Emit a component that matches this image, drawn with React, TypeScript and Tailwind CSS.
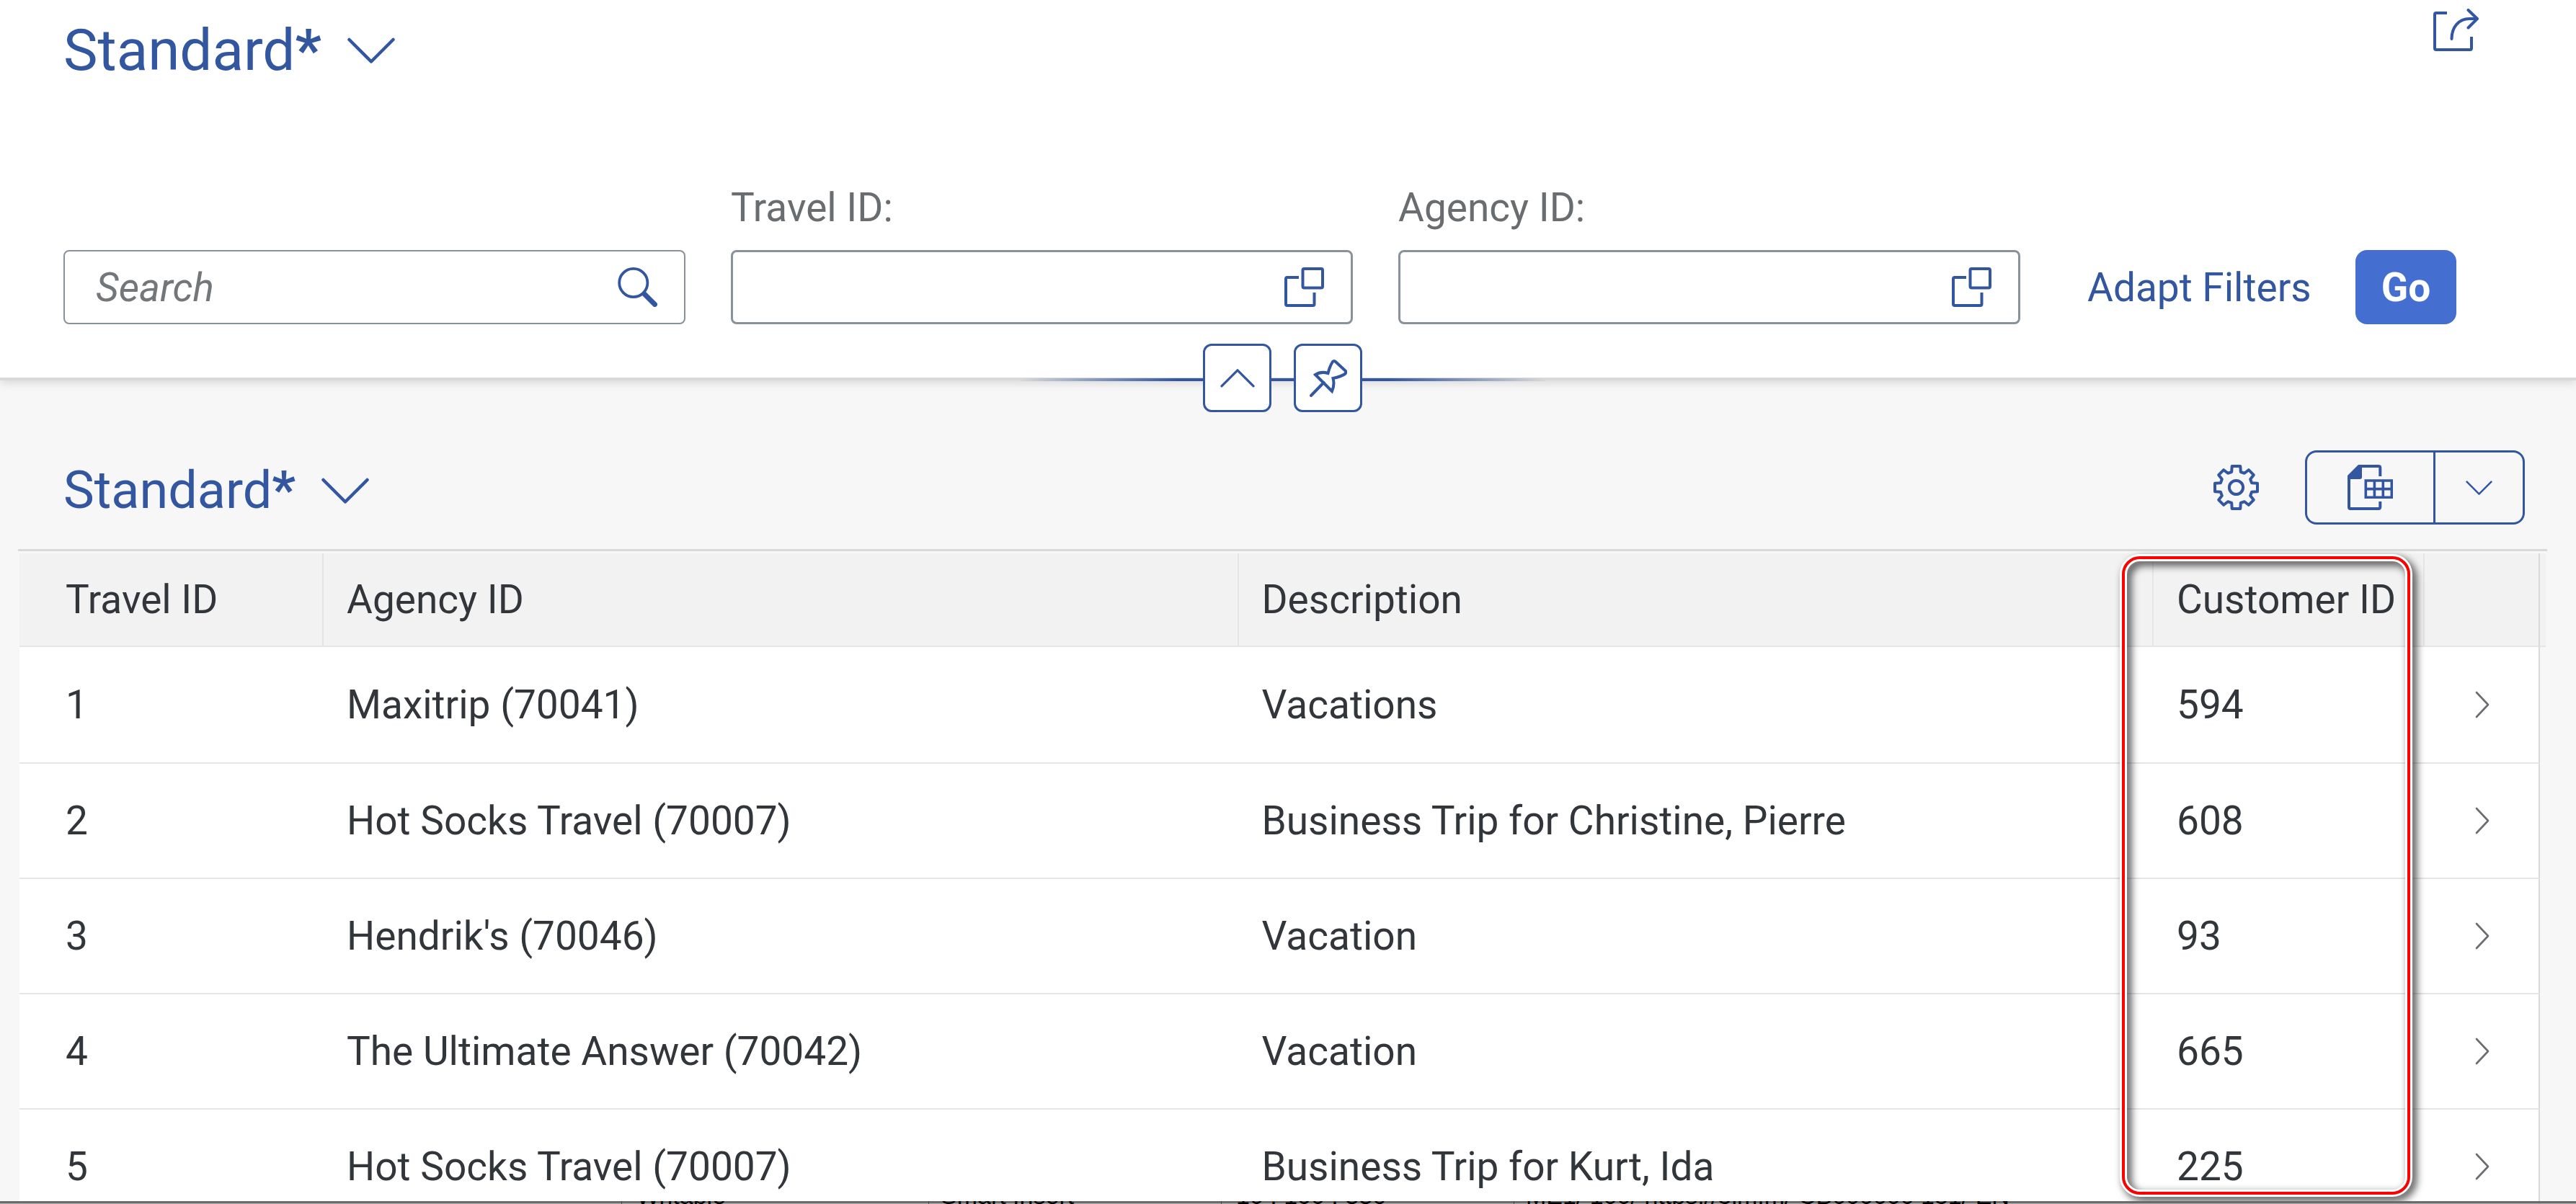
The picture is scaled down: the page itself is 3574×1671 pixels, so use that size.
import React from 'react';

interface Travel {
    id: number;
    agency: string;
    description: string;
    customer: number;
}

const travels: Travel[] = [
    { id: 1, agency: 'Maxitrip (70041)', description: 'Vacations', customer: 594 },
    { id: 2, agency: 'Hot Socks Travel (70007)', description: 'Business Trip for Christine, Pierre', customer: 608 },
    { id: 3, agency: "Hendrik's (70046)", description: 'Vacation', customer: 93 },
    { id: 4, agency: 'The Ultimate Answer (70042)', description: 'Vacation', customer: 665 },
    { id: 5, agency: 'Hot Socks Travel (70007)', description: 'Business Trip for Kurt, Ida', customer: 225 },
];

interface IconProps {
    className?: string;
}

const stroke = {
    fill: 'none',
    stroke: 'currentColor',
    strokeLinecap: 'round',
    strokeLinejoin: 'round',
} as const;

const ChevronIcon: React.FC<IconProps> = ({ className }) => (
    <svg viewBox="0 0 66 36" className={className} {...stroke} strokeWidth="4.5" aria-hidden="true">
        <path d="M2.5 3 33 33.5 63.5 3" />
    </svg>
);

const ShareIcon: React.FC<IconProps> = ({ className }) => (
    <svg viewBox="0 0 64 60" className={className} {...stroke} strokeWidth="4" aria-hidden="true">
        <path d="M19 6H4Q2 6 2 8V55Q2 57 4 57H51Q53 57 53 55V39" strokeLinecap="butt" />
        <path d="M25.5 42C25.5 25 36 14 50 14H60" />
        <path d="M48.5 2 61 14 48.5 26.5" />
    </svg>
);

const SearchIcon: React.FC<IconProps> = ({ className }) => (
    <svg viewBox="0 0 55 55" className={className} {...stroke} aria-hidden="true">
        <circle cx="21.8" cy="21.5" r="19.6" strokeWidth="3.8" />
        <path d="M37 37 51.5 51.5" strokeWidth="7" />
    </svg>
);

const ValueHelpIcon: React.FC<IconProps> = ({ className }) => (
    <svg viewBox="0 0 55 55" className={className} {...stroke} strokeWidth="4" strokeLinecap="butt" aria-hidden="true">
        <path d="M20 14H4Q2 14 2 16V51Q2 53 4 53H39.5Q41.5 53 41.5 51V35" />
        <rect x="25.5" y="2" width="27.5" height="26.5" rx="2" />
    </svg>
);

const PinIcon: React.FC<IconProps> = ({ className }) => (
    <svg viewBox="0 0 52 52" className={className} {...stroke} strokeWidth="4" aria-hidden="true">
        <path d="M2 50 19.5 32" />
        <path d="M8 21Q16 16 25.5 19Q28 9 32 3Q34 1 36 3L50 16Q51 18 49 20Q44 23.5 32.5 26Q35 35 31 44Z" strokeLinejoin="miter" />
    </svg>
);

const GearIcon: React.FC<IconProps> = ({ className }) => (
    <svg viewBox="-31.5 -31.5 63 63" className={className} {...stroke} strokeWidth="4" aria-hidden="true">
        <circle r="9.6" />
        <path d="M-5.8-29.5H5.8L6.3-21.5 11.5-19.7 17.3-24.3 24.3-17.3 19.7-11.5 21.5-6.3 29.5-5.8V5.8L21.5 6.3 19.7 11.5 24.3 17.3 17.3 24.3 11.5 19.7 6.3 21.5 5.8 29.5H-5.8L-6.3 21.5-11.5 19.7-17.3 24.3-24.3 17.3-19.7 11.5-21.5 6.3-29.5 5.8V-5.8L-21.5-6.3-19.7-11.5-24.3-17.3-17.3-24.3-11.5-19.7-6.3-21.5Z" />
    </svg>
);

const ExportIcon: React.FC<IconProps> = ({ className }) => (
    <svg viewBox="0 0 63 63" className={className} {...stroke} strokeLinecap="butt" strokeLinejoin="miter" aria-hidden="true">
        <path d="M16 2H43Q45.3 2 45.3 4V16M2 17V59Q2 61 4 61H43Q45.3 61 45.3 59V51" strokeWidth="4" />
        <path d="M15 0H20V17Q20 20 17 20H0V15Z" fill="currentColor" stroke="none" />
        <path d="M25.3 22H61.3V45.3H25.3ZM37.4 22V45.3M49.3 22V45.3M25.3 33.6H61.3" strokeWidth="3.6" />
    </svg>
);

interface FilterFieldProps {
    id: string;
    label: string;
}

const FilterField: React.FC<FilterFieldProps> = ({ id, label }) => (
    <div className="min-w-0">
        <label htmlFor={id} className="block mb-[27px] leading-[64px] text-[#6a6d70]">{label}</label>
        <div className="flex items-center h-[103px] border-3 border-[#89919a] rounded-lg bg-white pr-[37px]">
            <input id={id} type="text" className="flex-1 min-w-0 h-full px-10 outline-none" />
            <button type="button" aria-label={`Select ${label}`} className="text-[#3256a0]">
                <ValueHelpIcon className="w-[55px] h-[55px]" />
            </button>
        </div>
    </div>
);

const FilterHeader: React.FC = () => (
    <header className="relative z-10 shrink-0 bg-white border-b-4 border-[#d9d9d9] pt-3 pb-[74px] shadow-[0_4px_12px_rgba(0,0,0,0.12)]">
        <div className="flex items-start justify-between pl-[88px] pr-[134px] text-[#3256a0]">
            <button type="button" className="flex items-center gap-9 h-[116px] text-[80px] leading-none">
                <span>Standard<b>*</b></span>
                <ChevronIcon className="w-[66px] h-9" />
            </button>
            <button type="button" aria-label="Share">
                <ShareIcon className="w-16 h-[60px]" />
            </button>
        </div>
        <div className="grid grid-cols-[1fr_1fr_1fr_542px] items-end gap-x-[63px] mt-32 pl-[88px] pr-[166px]">
            <div className="flex min-w-0 items-center h-[103px] border-2 border-[#89919a] rounded-lg pr-[37px]">
                <input
                    type="search"
                    aria-label="Search"
                    placeholder="Search"
                    className="flex-1 min-w-0 h-full pl-[43px] outline-none placeholder:italic placeholder:text-[#74777a]"
                />
                <button type="button" aria-label="Start search" className="text-[#3256a0]">
                    <SearchIcon className="w-[55px] h-[55px]" />
                </button>
            </div>
            <FilterField id="travel-id" label="Travel ID:" />
            <FilterField id="agency-id" label="Agency ID:" />
            <div className="flex items-center justify-between pl-[30px]">
                <button type="button" className="text-[#3256a0]">Adapt Filters</button>
                <button type="button" className="w-[140px] h-[103px] rounded-2xl bg-[#446fd1] text-white font-bold">Go</button>
            </div>
        </div>
        {/* collapse / pin handles sit on the header's lower edge */}
        <div className="absolute inset-x-0 -bottom-12 flex justify-center gap-[31px] pr-[15px] text-[#3256a0]">
            <div className="absolute top-12 w-[730px] h-1 bg-linear-to-r from-[#d9d9d9] via-[#3256a0] via-30% to-[#3256a0] to-70%" />
            <div className="absolute top-12 w-[730px] h-1 bg-linear-to-l from-[#d9d9d9] to-transparent to-30%" />
            <button type="button" aria-label="Collapse header" className="relative flex items-center justify-center w-[95px] h-[95px] border-3 border-[#3256a0] rounded-xl bg-white">
                <ChevronIcon className="w-12 h-[26px] rotate-180" />
            </button>
            <button type="button" aria-label="Pin header" className="relative flex items-center justify-center w-[95px] h-[95px] border-3 border-[#3256a0] rounded-xl bg-white">
                <PinIcon className="w-[52px] h-[52px]" />
            </button>
        </div>
    </header>
);

const TableToolbar: React.FC = () => (
    <div className="flex shrink-0 items-center justify-between pt-[97px] pb-[34px] pl-[88px] pr-[71px] text-[#3256a0]">
        <button type="button" className="flex items-center gap-9 pt-2 text-7xl leading-none">
            <span>Standard<b>*</b></span>
            <ChevronIcon className="w-[66px] h-9" />
        </button>
        <div className="flex items-center gap-16">
            <button type="button" aria-label="Settings">
                <GearIcon className="w-[63px] h-[63px]" />
            </button>
            <div className="flex w-[305px] h-[103px] border-3 border-[#3256a0] rounded-2xl">
                <button type="button" aria-label="Export" className="flex items-center justify-center w-[178px] border-r-3 border-[#3256a0]">
                    <ExportIcon className="w-[63px] h-[63px]" />
                </button>
                <button type="button" aria-label="Export options" className="flex flex-1 items-center justify-center">
                    <ChevronIcon className="w-[37px] h-5" />
                </button>
            </div>
        </div>
    </div>
);

const TravelTable: React.FC = () => (
    <section className="relative flex-1 min-h-0 overflow-hidden ml-[25px] mr-10 border-t-3 border-[#d9d9d9]">
        <div className="px-0.5 pt-[3px]">
            <table className="w-full table-fixed border-separate border-spacing-0 text-left text-[#32363a]">
                <colgroup>
                    <col className="w-[422px]" />
                    <col />
                    <col />
                    <col className="w-[376px]" />
                    <col className="w-[160px]" />
                    <col className="w-2" />
                </colgroup>
                <thead>
                    <tr className="h-[130px] bg-[#f2f2f2] [&>th]:border-b-2 [&>th]:border-[#e5e5e5] [&>th]:font-normal">
                        <th scope="col" className="border-r-2 pl-16">Travel ID</th>
                        <th scope="col" className="border-r-2 pl-8">Agency ID</th>
                        <th scope="col" className="border-r-2 pl-8">Description</th>
                        <th scope="col" className="border-r-2 pl-8 whitespace-nowrap">Customer ID</th>
                        <td className="border-r-2 border-b-2 border-r-[#d9d9d9] border-b-[#e5e5e5]" />
                        <td className="border-b-2 border-[#e5e5e5]" />
                    </tr>
                </thead>
                <tbody>
                    {travels.map(travel => (
                        <tr key={travel.id} className="h-[160px] first:h-[162px] [&>td]:border-b-2 [&>td]:border-b-[#e5e5e5] [&>td]:bg-white">
                            <td className="pl-16">{travel.id}</td>
                            <td className="pl-8">{travel.agency}</td>
                            <td className="pl-8">{travel.description}</td>
                            <td className="pl-8">{travel.customer}</td>
                            <td className="border-r-2 border-r-[#d9d9d9] pl-[70px]">
                                <button type="button" aria-label={`Open travel ${travel.id}`} className="flex text-[#6a6d70]">
                                    <svg viewBox="0 0 20 38" className="w-5 h-[38px]" {...stroke} strokeWidth="2.6" aria-hidden="true">
                                        <path d="M2 2 18 19 2 36" />
                                    </svg>
                                </button>
                            </td>
                        </tr>
                    ))}
                </tbody>
            </table>
        </div>
        {/* callout frame around the customer column */}
        <div className="pointer-events-none absolute top-1 bottom-1.5 right-[187px] w-[406px] rounded-[28px] border-3 border-white drop-shadow-[5px_5px_6px_rgba(0,0,0,0.8)]">
            <div className="h-full rounded-[25px] border-4 border-[#ff0000]">
                <div className="h-full rounded-[21px] border-3 border-white" />
            </div>
        </div>
    </section>
);

const StatusBar: React.FC = () => (
    <footer className="flex shrink-0 items-end h-1 overflow-hidden pl-[862px] bg-linear-to-b from-[#6b6b6b] from-75% to-[#b0b0b0] to-75% font-['Liberation_Sans',sans-serif] text-[34px] leading-[24px] text-black whitespace-nowrap">
        <span className="w-[426px] pl-5 border-l border-[#444444]">Writable</span>
        <span className="w-[406px] pl-4 border-l border-[#444444]">Smart Insert</span>
        <span className="w-[406px] pl-5 border-l border-[#444444]">10 : 100 : 336</span>
        <span className="w-[714px] pl-4 border-l border-[#444444]">ME1/ 100/ https://5lm.m/ CB000000 151/ EN</span>
    </footer>
);

const App: React.FC = () => {
    return (
        <div className="flex flex-col h-screen overflow-hidden bg-[#f7f7f7] font-[Roboto,sans-serif] text-[55px] leading-[64px]">
            <FilterHeader />
            <main className="flex flex-1 flex-col min-h-0">
                <TableToolbar />
                <TravelTable />
            </main>
            <StatusBar />
        </div>
    );
};

export default App;
